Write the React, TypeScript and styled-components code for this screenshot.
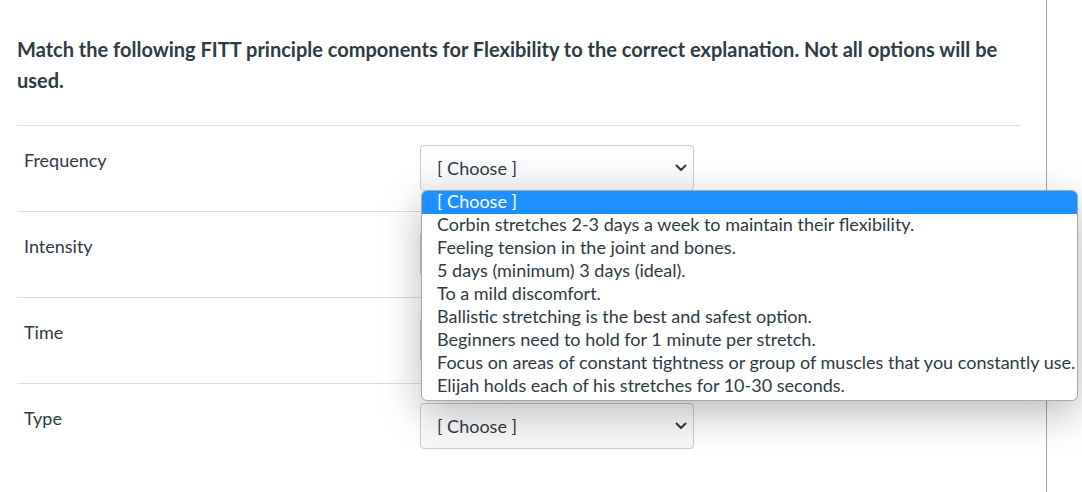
import * as React from 'react';
import styled, { createGlobalStyle } from 'styled-components';

const GlobalStyle = createGlobalStyle`
    body{
        margin: 0;
        background: #fff;
        font-family: Lato, "Open Sans", "Liberation Sans", sans-serif;
        color: #2d3b45;
    }
`;

const Page = styled.div`
    width: 1046px;
    min-height: 492px;
    border-right: 1px solid #a8a8a8;
`;

const Question = styled.div`
    padding: 34px 26px 0 17px;
    .question-text{
        margin: 0 0 29px 0;
        font-size: 20px;
        line-height: 31px;
        font-weight: 700;
    }
`;

const AnswerList = styled.div`
    margin-right: 0;
`;

const Row = styled.div`
    display: flex;
    align-items: flex-start;
    border-top: 1px solid #dadddf;
    padding: 19px 0 20px 7px;
    height: 46px;
`;

const Label = styled.div`
    width: 396px;
    flex: 0 0 396px;
    font-size: 18px;
    line-height: 26px;
    padding-top: 2px;
`;

const SelectWrap = styled.div`
    position: relative;
`;

const SelectBox = styled.div`
    box-sizing: border-box;
    width: 274px;
    height: 46px;
    border: 1px solid #c7cdd1;
    border-radius: 4px;
    background: linear-gradient(#fff, #f7f7f7);
    display: flex;
    align-items: center;
    justify-content: space-between;
    padding: 0 6px 0 16px;
    font-size: 18px;
    color: #2d3b45;
`;

const Chevron = () => (
    <svg width="12" height="8" viewBox="0 0 12 8">
        <path d="M1.5 1.5 L6 6 L10.5 1.5" fill="none" stroke="#2d3b45" strokeWidth="2" strokeLinecap="round" strokeLinejoin="round" />
    </svg>
);

const Dropdown = styled.ul`
    position: absolute;
    top: 45px;
    left: 1px;
    z-index: 10;
    box-sizing: border-box;
    width: 657px;
    margin: 0;
    padding: 0 0 2px 0;
    list-style: none;
    background: #fff;
    border: 1px solid #a9a9a9;
    border-radius: 6px;
    overflow: hidden;
    box-shadow: 0 12px 40px rgba(0,0,0,0.28);
`;

const Option = styled.li<{ $active?: boolean }>`
    height: 23px;
    line-height: 21px;
    padding-left: 15px;
    font-size: 18px;
    white-space: nowrap;
    background: ${p => p.$active ? '#1e90ff' : 'transparent'};
    color: ${p => p.$active ? '#fff' : '#2d3b45'};
`;

const labels = ['Frequency', 'Intensity', 'Time', 'Type'];

const options = [
    '[ Choose ]',
    'Corbin stretches 2-3 days a week to maintain their flexibility.',
    'Feeling tension in the joint and bones.',
    '5 days (minimum) 3 days (ideal).',
    'To a mild discomfort.',
    'Ballistic stretching is the best and safest option.',
    'Beginners need to hold for 1 minute per stretch.',
    'Focus on areas of constant tightness or group of muscles that you constantly use.',
    'Elijah holds each of his stretches for 10-30 seconds.',
];

function App() {
    return (
        <Page>
            <GlobalStyle />
            <Question>
                <p className='question-text'>
                    Match the following FITT principle components for Flexibility to the correct explanation. Not all options will be used.
                </p>
                <AnswerList>
                    {labels.map((label, index) => (
                        <Row key={label}>
                            <Label>{label}</Label>
                            <SelectWrap>
                                <SelectBox>
                                    <span>[ Choose ]</span>
                                    <Chevron />
                                </SelectBox>
                                {
                                    index === 0
                                    &&
                                    <Dropdown>
                                        {options.map((opt, i) => (
                                            <Option key={i} $active={i === 0}>{opt}</Option>
                                        ))}
                                    </Dropdown>
                                }
                            </SelectWrap>
                        </Row>
                    ))}
                </AnswerList>
            </Question>
        </Page>
    );
}

export default App;
